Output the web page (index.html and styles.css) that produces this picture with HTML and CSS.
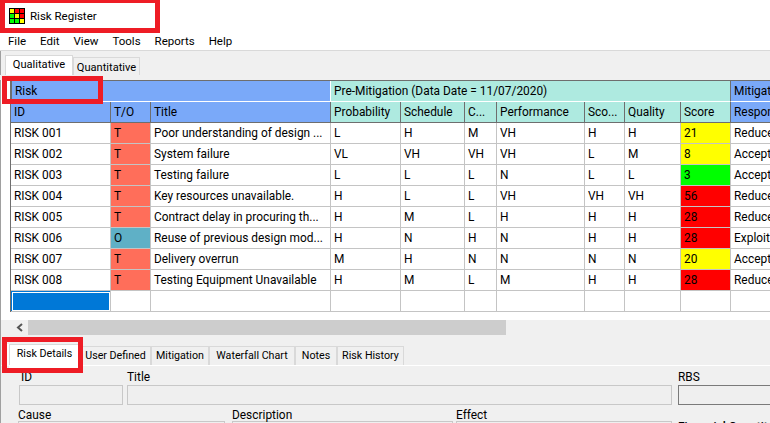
FILE: index.html
```html
<!DOCTYPE html>
<html lang="en">
<head>
<meta charset="utf-8">
<title>Risk Register</title>
<link rel="stylesheet" href="styles.css">
</head>
<body>
<div class="window">
  <header class="titlebar">
    <svg class="appicon" width="16" height="16" viewBox="0 0 16 16">
      <rect x="0" y="0" width="16" height="16" fill="#000"/>
      <rect x="1" y="1" width="4" height="4" fill="#ffff00"/><rect x="6" y="1" width="4" height="4" fill="#ff0000"/><rect x="11" y="1" width="4" height="4" fill="#ff0000"/>
      <rect x="1" y="6" width="4" height="4" fill="#00ff00"/><rect x="6" y="6" width="4" height="4" fill="#ffff00"/><rect x="11" y="6" width="4" height="4" fill="#ff0000"/>
      <rect x="1" y="11" width="4" height="4" fill="#00ff00"/><rect x="6" y="11" width="4" height="4" fill="#00ff00"/><rect x="11" y="11" width="4" height="4" fill="#ffff00"/>
    </svg>
    <span class="apptitle">Risk Register</span>
  </header>
  <nav class="menubar">
    <span>File</span><span>Edit</span><span>View</span><span>Tools</span><span>Reports</span><span>Help</span>
  </nav>
  <div class="toptabs">
    <span class="tab tab-active toptab-q">Qualitative</span>
    <span class="tab toptab-n">Quantitative</span>
  </div>
  <div class="gridwrap">
    <table class="grid">
      <colgroup>
        <col class="c-id"><col class="c-to"><col class="c-title"><col class="c-prob"><col class="c-sch"><col class="c-cost"><col class="c-perf"><col class="c-sco"><col class="c-qual"><col class="c-score"><col class="c-resp">
      </colgroup>
      <thead>
        <tr class="grp">
          <th colspan="3" class="blue">Risk</th>
          <th colspan="7" class="teal">Pre-Mitigation (Data Date = 11/07/2020)</th>
          <th class="blue">Mitigation</th>
        </tr>
        <tr class="hdr">
          <th class="blue">ID</th><th class="blue">T/O</th><th class="blue">Title</th>
          <th class="teal">Probability</th><th class="teal">Schedule</th><th class="teal">C...</th><th class="teal">Performance</th><th class="teal">Sco...</th><th class="teal">Quality</th><th class="teal">Score</th>
          <th class="blue">Response</th>
        </tr>
      </thead>
      <tbody>
        <tr><td>RISK 001</td><td class="threat">T</td><td>Poor understanding of design ...</td><td>L</td><td>H</td><td>M</td><td>VH</td><td>H</td><td>H</td><td class="yellow">21</td><td>Reduce</td></tr>
        <tr><td>RISK 002</td><td class="threat">T</td><td>System failure</td><td>VL</td><td>VH</td><td>VH</td><td>VH</td><td>L</td><td>M</td><td class="yellow">8</td><td>Accept</td></tr>
        <tr><td>RISK 003</td><td class="threat">T</td><td>Testing failure</td><td>L</td><td>L</td><td>L</td><td>N</td><td>L</td><td>L</td><td class="green">3</td><td>Accept</td></tr>
        <tr><td>RISK 004</td><td class="threat">T</td><td>Key resources unavailable.</td><td>H</td><td>L</td><td>L</td><td>VH</td><td>VH</td><td>VH</td><td class="red">56</td><td>Reduce</td></tr>
        <tr><td>RISK 005</td><td class="threat">T</td><td>Contract delay in procuring th...</td><td>H</td><td>M</td><td>L</td><td>H</td><td>H</td><td>H</td><td class="red">28</td><td>Reduce</td></tr>
        <tr><td>RISK 006</td><td class="opp">O</td><td>Reuse of previous design mod...</td><td>H</td><td>N</td><td>H</td><td>N</td><td>H</td><td>H</td><td class="red">28</td><td>Exploit</td></tr>
        <tr><td>RISK 007</td><td class="threat">T</td><td>Delivery overrun</td><td>M</td><td>H</td><td>N</td><td>N</td><td>N</td><td>N</td><td class="yellow">20</td><td>Accept</td></tr>
        <tr><td>RISK 008</td><td class="threat">T</td><td>Testing Equipment Unavailable</td><td>H</td><td>M</td><td>L</td><td>M</td><td>H</td><td>H</td><td class="red">28</td><td>Reduce</td></tr>
        <tr><td class="selected"></td><td></td><td></td><td></td><td></td><td></td><td></td><td></td><td></td><td></td><td></td></tr>
      </tbody>
    </table>
    <div class="scrollbar">
      <span class="arrow"><svg width="8" height="9" viewBox="0 0 8 9"><path d="M6 1 L2 4.5 L6 8" fill="none" stroke="#555" stroke-width="2"/></svg></span>
      <span class="thumb"></span>
    </div>
  </div>
  <div class="lower">
    <div class="lowertabs">
      <span class="tab tab-active ltab-rd">Risk Details</span>
      <span class="tab ltab ltab-ud">User Defined</span>
      <span class="tab ltab ltab-mi">Mitigation</span>
      <span class="tab ltab ltab-wf">Waterfall Chart</span>
      <span class="tab ltab ltab-no">Notes</span>
      <span class="tab ltab ltab-rh">Risk History</span>
    </div>
    <div class="form">
      <div class="row row1">
        <label class="fld"><span>ID</span><i class="input"></i></label>
        <label class="fld fld-title"><span>Title</span><i class="input"></i></label>
        <label class="fld fld-rbs"><span>RBS</span><i class="input dark"></i></label>
      </div>
      <div class="row row2">
        <label class="fld"><span>Cause</span><i class="input"></i></label>
        <label class="fld"><span>Description</span><i class="input"></i></label>
        <label class="fld"><span>Effect</span><i class="input"></i></label>
        <span class="fin">Financial Quantitative</span>
      </div>
    </div>
  </div>
</div>
<div class="mark mark-title"></div>
<div class="mark mark-risk"></div>
<div class="mark mark-details"></div>
</body>
</html>
```
FILE: styles.css
```css
* { box-sizing: border-box; }
html, body { margin: 0; padding: 0; width: 770px; height: 423px; overflow: hidden; }
body { font: 11.9px/16px Roboto, "Noto Sans", sans-serif; color: #000; background: #f0f0f0; position: relative; }
.window { width: 770px; height: 423px; overflow: hidden; display: flex; flex-direction: column; }

.titlebar { height: 32px; background: #fff; display: flex; align-items: center; padding-left: 9px; gap: 5px; flex: none; font-size: 11.5px; }
.menubar { height: 19px; background: #fff; border-bottom: 1px solid #d9d9d9; display: flex; padding-left: 8px; gap: 14px; flex: none; line-height: 18px; font-size: 11.5px; }

.toptabs { height: 24px; display: flex; align-items: flex-end; padding-left: 4px; flex: none; background: #f0f0f0; border-left: 1px solid #a0a0a0; font-size: 11.1px; }
.tab { display: block; background: #f0f0f0; border: 1px solid #d9d9d9; border-bottom: 0; text-align: center; white-space: nowrap; }
.tab-active { background: #fff; }
.toptab-q { width: 68px; height: 20px; line-height: 18px; }
.toptab-n { width: 67px; height: 18px; line-height: 19px; }

.gridwrap { flex: none; height: 264px; margin-top: 5px; padding-left: 10px; border-left: 1px solid #a0a0a0; position: relative; overflow: hidden; background: linear-gradient(#fff, #fff) 0 0 / 100% 240px no-repeat, #f0f0f0; }
.grid { border-collapse: separate; border-spacing: 0; table-layout: fixed; width: 800px; border-top: 1px solid #6e6e6e; border-left: 1px solid #6e6e6e; margin-left: -1px; background: #fff; }
.c-id { width: 100px; } .c-to { width: 40px; } .c-title { width: 180px; } .c-prob { width: 70px; } .c-sch { width: 64px; } .c-cost { width: 32px; } .c-perf { width: 88px; } .c-sco { width: 40px; } .c-qual { width: 56px; } .c-score { width: 50px; } .c-resp { width: 80px; }
.grid th, .grid td { height: 21px; padding: 0 0 0 3px; font-weight: 400; text-align: left; white-space: nowrap; overflow: hidden; line-height: 20px; }
.grid td { border-right: 1px solid #c4c4c4; border-bottom: 1px solid #c4c4c4; }
.grid th { border-right: 1px solid #6e6e6e; border-bottom: 1px solid #6e6e6e; }
.grp th { border-bottom-color: #fff; border-right-color: #fff; }
.grp th.teal { border-right-color: #6e6e6e; }
.grp th:first-child { border-left: 1px solid #6e6e6e; padding-left: 3px; }
.blue { background: #7aa9f9; }
.teal { background: #aeeae0; }
.threat { background: #ff6e5a; }
.opp { background: #5fb0c6; }
.yellow { background: #ffff00; }
.green { background: #00ff00; }
.red { background: #ff0000; }
.selected { background: #0078d7; outline: 1px solid #fff; outline-offset: -2px; }

.scrollbar { height: 15px; margin-top: 8px; background: #f0f0f0; display: flex; align-items: stretch; }
.arrow { width: 17px; display: flex; align-items: center; justify-content: center; }
.thumb { width: 478px; background: #cdcdcd; }

.lower { flex: 1; min-height: 0; border-top: 1px solid #a0a0a0; margin-top: -1px; border-left: 1px solid #a0a0a0; display: flex; flex-direction: column; background: #f0f0f0; }
.lowertabs { display: flex; align-items: flex-end; height: 22px; padding-left: 8px; border-bottom: 1px solid #fff; flex: none; font-size: 10.7px; }
.ltab { height: 19px; line-height: 18px; padding: 0; }
.ltab-rd { width: 71px; height: 21px; line-height: 18px; box-shadow: -3px 0 0 #fff, 0 3px 0 #fff; }
.ltab-ud { width: 71px; }
.ltab-mi { width: 58px; }
.ltab-wf { width: 86px; }
.ltab-no { width: 42px; }
.ltab-rh { width: 67px; }
.form { padding: 3px 0 0 18px; flex: 1; }
.row { display: grid; }
.row1 { grid-template-columns: 104px 545px 120px; column-gap: 4px; height: 38px; }
.row2 { grid-template-columns: 214px 224px 222px 100px; height: 36px; margin-left: -1px; }
.fld { display: block; }
.fld span { display: block; height: 16px; line-height: 16px; padding-left: 2px; }
.fld-title span { padding-left: 0; }
.fld-rbs { margin-left: 2px; }
.fld-rbs span { padding-left: 0; }
.row2 .fld span { height: 14px; padding-left: 0; }
.input { display: block; height: 20px; border: 1px solid #c8c8c8; background: #efefef; }
.input.dark { border-color: #7a7a7a; }
.row2 .fld:nth-child(1) .input { width: 207px; }
.row2 .fld:nth-child(2) .input { width: 221px; }
.row2 .fld:nth-child(3) .input { width: 216px; }
.fin { white-space: nowrap; padding-top: 12px; font-weight: 500; }

.mark { position: absolute; border: 5px solid #ee1c25; pointer-events: none; }
.mark-title { left: 0; top: -2px; width: 160px; height: 35px; }
.mark-risk { left: 2px; top: 76px; width: 101px; height: 28px; }
.mark-details { left: 2px; top: 337px; width: 81px; height: 36px; }
```
